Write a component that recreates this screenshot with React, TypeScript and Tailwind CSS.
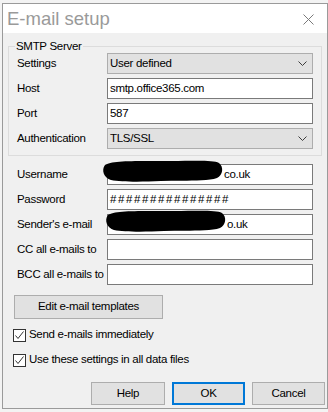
const font = { fontFamily: '"Liberation Sans", Arial, sans-serif' };

function Chevron() {
  return (
    <svg width="9" height="5" viewBox="0 0 9 5" className="shrink-0">
      <path d="M0.5 0.5 L4.5 4.5 L8.5 0.5" fill="none" stroke="#3c3c3c" strokeWidth="1" />
    </svg>
  );
}

function Select({ value }: { value: string }) {
  return (
    <div className="w-[206px] h-[21px] bg-[#e1e1e1] border border-[#adadad] flex items-center justify-between pl-[2px] pr-[5px]">
      <span>{value}</span>
      <Chevron />
    </div>
  );
}

function Input({ value, className = '' }: { value?: string; className?: string }) {
  return (
    <div className={`w-[206px] h-[21px] bg-white border border-[#7a7a7a] flex items-center pl-[2px] ${className}`}>
      {value}
    </div>
  );
}

function Row({ label, children }: { label: string; children: React.ReactNode }) {
  return (
    <div className="flex items-center">
      <div className="w-[90px] shrink-0 whitespace-nowrap">{label}</div>
      {children}
    </div>
  );
}

function Check({ label }: { label: string }) {
  return (
    <div className="flex items-center gap-[3px] h-[14px]">
      <div className="w-[13px] h-[13px] bg-white border border-[#333333] flex items-center justify-center">
        <svg width="11" height="11" viewBox="0 0 11 11">
          <path d="M1.5 5.5 L4 8.5 L9.5 1.5" fill="none" stroke="#333333" strokeWidth="1" />
        </svg>
      </div>
      <span>{label}</span>
    </div>
  );
}

function Blob({ className }: { className: string }) {
  return (
    <svg className={`absolute ${className}`} width="124" height="22" viewBox="0 0 124 22">
      <path
        d="M4 5 C10 0 40 1 70 1 C95 1 112 0 118 3 C123 7 122 15 116 18 C104 22 80 20 60 21 C40 22 20 22 10 20 C3 18 0 10 4 5 Z"
        fill="#000"
      />
    </svg>
  );
}

export default function App() {
  return (
    <div className="w-[328px] h-[412px] bg-[#f3f3f3] pt-[3px] pl-[2px] overflow-hidden text-[11.5px] tracking-[-0.3px] text-black" style={font}>
      <div className="relative w-[326px] h-[406px] border border-[#9a9a9a] bg-[#f0f0f0] flex flex-col">
        {/* title bar */}
        <div className="h-[29px] shrink-0 bg-white flex items-center justify-between pl-[4px] pr-[13px] pt-[2px]">
          <span className="text-[18.5px] text-[#9a9a9a] leading-none tracking-normal">E-mail setup</span>
          <svg width="11" height="11" viewBox="0 0 11 11">
            <path d="M0.5 0.5 L10.5 10.5 M10.5 0.5 L0.5 10.5" stroke="#7a7a7a" strokeWidth="1" />
          </svg>
        </div>

        <div className="flex flex-col pl-[5px] pt-[13px]">
          {/* SMTP group */}
          <div className="relative shrink-0 w-[314px] h-[110px] border border-[#dcdcdc] pl-[8px] pt-[6px] flex flex-col gap-[4px]">
            <span className="absolute left-[6px] top-[-9px] bg-[#f0f0f0] px-[1px] leading-[16px]">SMTP Server</span>
            <Row label="Settings"><Select value="User defined" /></Row>
            <Row label="Host"><Input value="smtp.office365.com" /></Row>
            <Row label="Port"><Input value="587" /></Row>
            <Row label="Authentication"><Select value="TLS/SSL" /></Row>
          </div>

          <div className="relative flex flex-col gap-[4px] pl-[9px] pt-[8px]">
            <Row label="Username"><Input className="pl-[116px]" value="co.uk" /></Row>
            <Row label="Password"><Input className="tracking-[1.6px]" value="###############" /></Row>
            <Row label="Sender's e-mail"><Input className="pl-[119px]" value="o.uk" /></Row>
            <Row label="CC all e-mails to"><Input /></Row>
            <Row label="BCC all e-mails to"><Input /></Row>
            <Blob className="left-[93px] top-[4px]" />
            <Blob className="left-[96px] top-[54px]" />
          </div>

          <button className="mt-[10px] ml-[6px] w-[149px] h-[24px] bg-[#e1e1e1] border border-[#adadad] text-[11.5px]">
            Edit e-mail templates
          </button>

          <div className="flex flex-col gap-[11px] ml-[5px] mt-[9px]">
            <Check label="Send e-mails immediately" />
            <Check label="Use these settings in all data files" />
          </div>

          <div className="flex justify-end gap-[7px] pr-[2px] mt-[15px]">
            <button className="w-[74px] h-[23px] bg-[#e1e1e1] border border-[#adadad]">Help</button>
            <button className="w-[73px] h-[23px] bg-[#e1e1e1] border-2 border-[#0078d7]">OK</button>
            <button className="w-[73px] h-[23px] bg-[#e1e1e1] border border-[#adadad]">Cancel</button>
          </div>
        </div>
      </div>
    </div>
  );
}
